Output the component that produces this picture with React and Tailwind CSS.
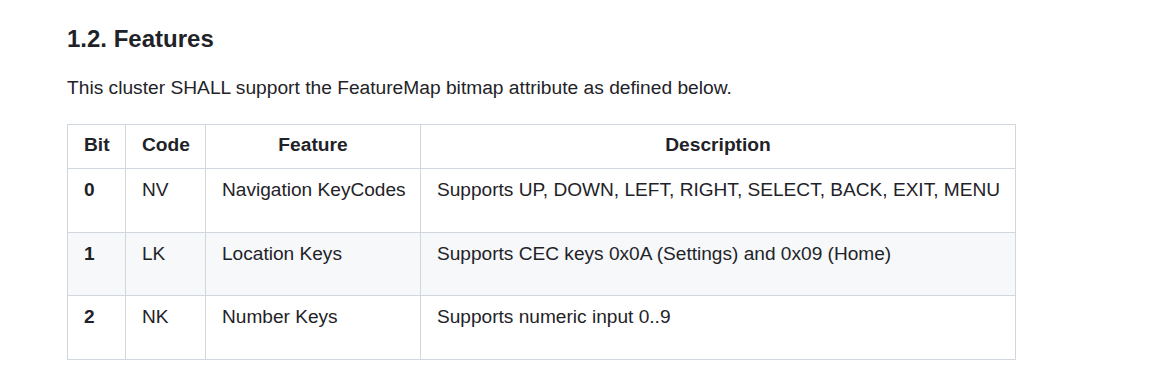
import React from 'react'

const features = [
  { bit: '0', code: 'NV', name: 'Navigation KeyCodes', desc: 'Supports UP, DOWN, LEFT, RIGHT, SELECT, BACK, EXIT, MENU' },
  { bit: '1', code: 'LK', name: 'Location Keys', desc: 'Supports CEC keys 0x0A (Settings) and 0x09 (Home)' },
  { bit: '2', code: 'NK', name: 'Number Keys', desc: 'Supports numeric input 0..9' },
]

const th = 'border border-[#d0d7de] px-4 pt-[8px] pb-[11px] font-bold text-center'
const td = 'border border-[#d0d7de] px-4 pt-[9px] pb-[29.5px] align-top whitespace-nowrap text-[19.1px]'

export default function App() {
  return (
    <div className="min-h-screen bg-white pl-[67px] pt-[24px] text-[#1f2328] font-['Liberation_Sans',Arial,sans-serif] text-[19.2px] leading-6">
      <h2 className="text-[24px] font-bold leading-[30px]">1.2. Features</h2>
      <p className="mt-[22px] mb-[24px]">This cluster SHALL support the FeatureMap bitmap attribute as defined below.</p>
      <table className="border-collapse table-fixed w-[949px]">
        <thead>
          <tr>
            <th className={`${th} w-[58px]`}>Bit</th>
            <th className={`${th} w-[80px]`}>Code</th>
            <th className={`${th} w-[215px]`}>Feature</th>
            <th className={th}>Description</th>
          </tr>
        </thead>
        <tbody>
          {features.map((f, i) => (
            <tr key={f.bit} className={i % 2 === 1 ? 'bg-[#f6f8fa]' : 'bg-white'}>
              <td className={`${td} font-bold`}>{f.bit}</td>
              <td className={td}>{f.code}</td>
              <td className={td}>{f.name}</td>
              <td className={td}>{f.desc}</td>
            </tr>
          ))}
        </tbody>
      </table>
    </div>
  )
}
